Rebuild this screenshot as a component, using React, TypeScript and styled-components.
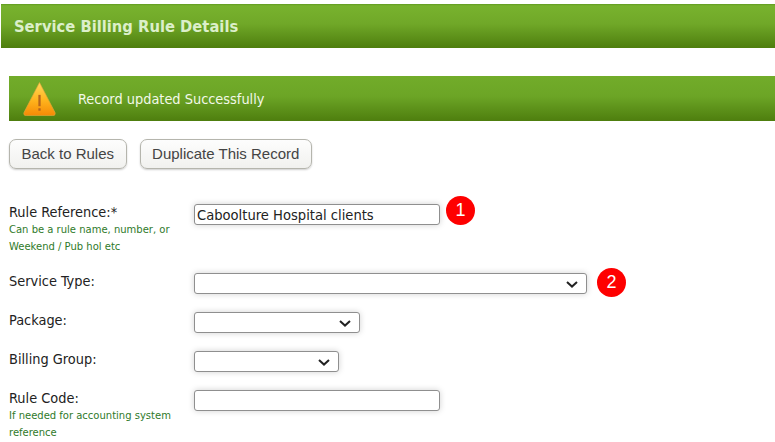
import styled, { createGlobalStyle } from "styled-components";

const GlobalStyle = createGlobalStyle`
  html, body {
    margin: 0;
    padding: 0;
    background: #fff;
    font-family: "DejaVu Sans Condensed", "DejaVu Sans", sans-serif;
  }
`;

const Page = styled.div`
  width: 775px;
  height: 442px;
  overflow: hidden;
  padding-top: 4px;
  box-sizing: border-box;
`;

const TitleBar = styled.h1`
  margin: 0 0 28px 1px;
  height: 44px;
  padding-left: 13px;
  display: flex;
  align-items: center;
  box-sizing: border-box;
  background: linear-gradient(#5f9a20 0, #78b22e 4%, #70a828 45%, #4e7e0e 100%);
  color: #dcefca;
  font-size: 16.4px;
  font-weight: 700;
  font-family: "DejaVu Sans Condensed", "DejaVu Sans", sans-serif;
`;

const Notice = styled.div`
  margin: 0 0 18px 9px;
  height: 45px;
  display: flex;
  align-items: center;
  background: linear-gradient(#72ac2a 0, #6ca526 45%, #4e7e0e 100%);
  color: #f2f8e8;
  font-size: 14.4px;
`;

const WarnIcon = styled.svg`
  width: 35px;
  height: 36px;
  margin: 1px 21px 0 13px;
  flex-shrink: 0;
`;

const ButtonRow = styled.div`
  display: flex;
  gap: 13px;
  margin: 0 0 35px 9px;
`;

const Button = styled.button`
  height: 30px;
  padding: 0 11.5px 2px;
  border: 1px solid #b5b5ad;
  border-radius: 7px;
  background: linear-gradient(#fdfdfd, #f1f1ef);
  box-shadow: 0 1px 2px rgba(0, 0, 0, 0.2);
  color: #444;
  font-family: "Liberation Sans", Arial, sans-serif;
  font-size: 15px;
`;

const Row = styled.div<{ $height: number }>`
  display: grid;
  grid-template-columns: 185px 1fr;
  height: ${(p) => p.$height}px;
  padding-left: 9px;
`;

const LabelCol = styled.div`
  display: flex;
  flex-direction: column;
  margin-top: -1px;
`;

const Label = styled.label`
  font-size: 14.4px;
  line-height: 18px;
  color: #222;
`;

const Hint = styled.div`
  font-family: "DejaVu Sans", sans-serif;
  font-size: 10px;
  line-height: 17px;
  color: #2f7a2a;
  width: 170px;
`;

const FieldCol = styled.div`
  display: flex;
  align-items: flex-start;
`;

const TextInput = styled.input`
  width: 246px;
  height: 21px;
  box-sizing: border-box;
  padding: 0 2px;
  border: 1px solid #8f8f8f;
  border-radius: 3px;
  background: #fff;
  box-shadow: 0 0 6px rgba(0, 0, 0, 0.18);
  color: #222;
  font-family: "DejaVu Sans Condensed", "DejaVu Sans", sans-serif;
  font-size: 14.6px;
`;

const SelectWrap = styled.div<{ $width: number }>`
  position: relative;
  width: ${(p) => p.$width}px;
  height: 21px;
`;

const Select = styled.select`
  appearance: none;
  display: block;
  width: 100%;
  height: 100%;
  box-sizing: border-box;
  border: 1px solid #8f8f8f;
  border-radius: 3px;
  background: #fff;
  box-shadow: 0 0 6px rgba(0, 0, 0, 0.18);
`;

const Chevron = styled.svg`
  position: absolute;
  right: 9px;
  top: 8px;
  width: 12px;
  height: 7px;
  pointer-events: none;
`;

const Badge = styled.span<{ $gap: number; $top: number }>`
  width: 29px;
  height: 29px;
  margin: ${(p) => p.$top}px 0 0 ${(p) => p.$gap}px;
  border-radius: 50%;
  background: #fe0000;
  color: #fff;
  display: flex;
  align-items: center;
  justify-content: center;
  font-family: "Liberation Sans", Arial, sans-serif;
  font-size: 18px;
`;

const Dropdown = ({ width }: { width: number }) => (
  <SelectWrap $width={width}>
    <Select />
    <Chevron viewBox="0 0 12 7">
      <path d="M1 1 L6 5.6 L11 1" fill="none" stroke="#222" strokeWidth="2" />
    </Chevron>
  </SelectWrap>
);

export default function App() {
  return (
    <Page>
      <GlobalStyle />
      <TitleBar>Service Billing Rule Details</TitleBar>
      <Notice>
        <WarnIcon viewBox="0 0 34 34">
          <defs>
            <linearGradient id="warn" x1="0" y1="0" x2="0" y2="1">
              <stop offset="0" stopColor="#ffd75a" />
              <stop offset="0.55" stopColor="#ffb31c" />
              <stop offset="1" stopColor="#f58a06" />
            </linearGradient>
          </defs>
          <path
            d="M17 1 L32 30 Q33 33 30 33 L4 33 Q1 33 2 30 Z"
            fill="url(#warn)"
            stroke="#e8a83a"
            strokeWidth="0.6"
          />
          <rect x="15.9" y="13" width="2.2" height="11" fill="#b5651d" />
          <rect x="15.9" y="26" width="2.2" height="2.4" fill="#b5651d" />
        </WarnIcon>
        Record updated Successfully
      </Notice>
      <ButtonRow>
        <Button>Back to Rules</Button>
        <Button>Duplicate This Record</Button>
      </ButtonRow>
      <Row $height={69}>
        <LabelCol>
          <Label>Rule Reference:*</Label>
          <Hint>Can be a rule name, number, or Weekend / Pub hol etc</Hint>
        </LabelCol>
        <FieldCol>
          <TextInput defaultValue="Caboolture Hospital clients" />
          <Badge $gap={6} $top={-8}>1</Badge>
        </FieldCol>
      </Row>
      <Row $height={39}>
        <LabelCol>
          <Label>Service Type:</Label>
        </LabelCol>
        <FieldCol>
          <Dropdown width={393} />
          <Badge $gap={10} $top={-5}>2</Badge>
        </FieldCol>
      </Row>
      <Row $height={39}>
        <LabelCol>
          <Label>Package:</Label>
        </LabelCol>
        <FieldCol>
          <Dropdown width={166} />
        </FieldCol>
      </Row>
      <Row $height={39}>
        <LabelCol>
          <Label>Billing Group:</Label>
        </LabelCol>
        <FieldCol>
          <Dropdown width={145} />
        </FieldCol>
      </Row>
      <Row $height={60}>
        <LabelCol>
          <Label>Rule Code:</Label>
          <Hint>If needed for accounting system reference</Hint>
        </LabelCol>
        <FieldCol>
          <TextInput />
        </FieldCol>
      </Row>
    </Page>
  );
}
